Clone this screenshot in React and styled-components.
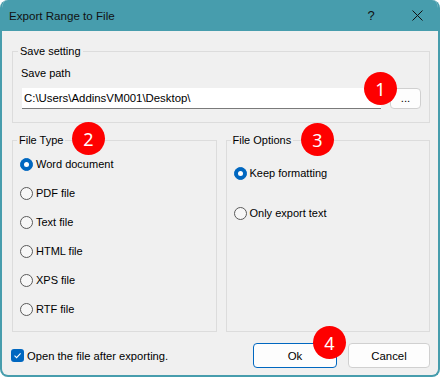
import React from 'react'
import styled, {createGlobalStyle} from 'styled-components'

const GlobalStyle = createGlobalStyle`
  html, body {
    margin: 0;
    padding: 0;
    background: #ffffff;
  }
  * {
    box-sizing: border-box;
  }
`

const Window = styled.div`
  position: relative;
  width: 440px;
  height: 377px;
  display: flex;
  flex-direction: column;
  background-color: #f0f0f0;
  border: 2px solid #479dad;
  border-top: none;
  border-radius: 8px;
  overflow: hidden;
  font-family: 'Liberation Sans', Arial, sans-serif;
  font-size: 11px;
  color: #000000;
`

const TitleBar = styled.div`
  height: 31px;
  flex-shrink: 0;
  display: flex;
  align-items: center;
  background-color: #479dad;
  padding-left: 7px;
  margin: 0 -2px;
`

const Title = styled.span`
  flex: 1;
  font-size: 11.6px;
  color: #111111;
  padding-left: 2px;
`

const TitleButton = styled.div`
  width: 46px;
  height: 31px;
  display: flex;
  align-items: center;
  justify-content: center;
  font-size: 13px;
  color: #111111;
`

const Body = styled.div`
  flex: 1;
  display: flex;
  flex-direction: column;
  padding: 13px 8px 0 10px;
`

const Group = styled.fieldset`
  margin: 0;
  padding: ${p => p.$pad || '8px 8px 13px 8px'};
  border: 1px solid #dcdcdc;
  border-radius: 0;
  min-width: 0;
  display: flex;
  flex-direction: column;
  flex: ${p => (p.$grow ? 1 : 'none')};
`

const Legend = styled.legend`
  padding: 0 2px;
  margin-left: -3px;
  font-size: 11px;
  font-weight: 400;
  line-height: 14px;
  color: #000000;
`

const Label = styled.div`
  line-height: 14px;
`

const PathRow = styled.div`
  display: flex;
  align-items: center;
  gap: 9px;
  margin-top: 7px;
`

const PathInput = styled.input`
  flex: 1;
  height: 21px;
  margin-left: 1px;
  margin-top: 1px;
  border: none;
  border-bottom: 1px solid #7a7a7a;
  background: #ffffff;
  padding: 0 2px;
  font-family: 'Liberation Sans', Arial, sans-serif;
  font-size: 11.4px;
  color: #000000;
  outline: none;
`

const Button = styled.button`
  width: ${p => p.$w || 83}px;
  height: ${p => p.$h || 25}px;
  padding: 0;
  background: #fdfdfd;
  border: 1px solid ${p => (p.$focus ? '#0067c0' : '#d0d0d0')};
  border-radius: 4px;
  font-family: 'Liberation Sans', Arial, sans-serif;
  font-size: 11.4px;
  color: #000000;
`

const Columns = styled.div`
  display: flex;
  gap: 9px;
  margin-top: 10px;
`

const OptionList = styled.div`
  display: flex;
  flex-direction: column;
  gap: ${p => p.$gap}px;
`

const Option = styled.label`
  display: flex;
  align-items: center;
  gap: 3px;
  line-height: 14px;
  height: 14px;
`

const RadioDot = styled.span`
  width: 13px;
  height: 13px;
  border-radius: 50%;
  flex-shrink: 0;
  display: flex;
  align-items: center;
  justify-content: center;
  background: ${p => (p.$on ? '#0067c0' : '#f7f7f7')};
  border: 1px solid ${p => (p.$on ? '#0067c0' : '#5a5a5a')};
  &::after {
    content: '';
    display: ${p => (p.$on ? 'block' : 'none')};
    width: 5px;
    height: 5px;
    border-radius: 50%;
    background: #ffffff;
  }
`

const Footer = styled.div`
  display: flex;
  align-items: center;
  margin-top: 11px;
  gap: 11px;
`

const CheckRow = styled.label`
  flex: 1;
  display: flex;
  align-items: center;
  gap: 3px;
  margin-left: -1px;
  font-size: 11.2px;
`

const CheckBox = styled.span`
  width: 13px;
  height: 13px;
  border-radius: 3px;
  background: #0067c0;
  display: flex;
  align-items: center;
  justify-content: center;
`

const Badge = styled.div`
  position: absolute;
  left: ${p => p.$x - 16}px;
  top: ${p => p.$y - 16}px;
  width: 33px;
  height: 33px;
  border-radius: 50%;
  background: #fe0000;
  color: #ffffff;
  display: flex;
  align-items: center;
  justify-content: center;
  font-family: 'Noto Sans', 'Liberation Sans', sans-serif;
  font-size: 18px;
  line-height: 1;
`

const Radio = ({on, children}) => (
  <Option>
    <RadioDot $on={on} />
    <span>{children}</span>
  </Option>
)

const fileTypes = ['Word document', 'PDF file', 'Text file', 'HTML file', 'XPS file', 'RTF file']

export default function App() {
  return (
    <>
      <GlobalStyle />
      <Window>
        <TitleBar>
          <Title>Export Range to File</Title>
          <TitleButton>?</TitleButton>
          <TitleButton>
            <svg width="11" height="11" viewBox="0 0 11 11">
              <path d="M0.5 0.5L10.5 10.5M10.5 0.5L0.5 10.5" stroke="#111" strokeWidth="1" />
            </svg>
          </TitleButton>
        </TitleBar>
        <Body>
          <Group>
            <Legend>Save setting</Legend>
            <Label>Save path</Label>
            <PathRow>
              <PathInput readOnly value="C:\Users\AddinsVM001\Desktop\" />
              <Button $w={31} $h={21}>...</Button>
            </PathRow>
          </Group>
          <Columns>
            <Group $grow $pad="10px 8px 15px 7px">
              <Legend>File Type</Legend>
              <OptionList $gap={15}>
                {fileTypes.map((t, i) => (
                  <Radio key={t} on={i === 0}>{t}</Radio>
                ))}
              </OptionList>
            </Group>
            <Group $grow $pad="19px 8px 15px 7px">
              <Legend>File Options</Legend>
              <OptionList $gap={26}>
                <Radio on>Keep formatting</Radio>
                <Radio>Only export text</Radio>
              </OptionList>
            </Group>
          </Columns>
          <Footer>
            <CheckRow>
              <CheckBox>
                <svg width="9" height="9" viewBox="0 0 9 9">
                  <path d="M1.5 4.6L3.6 6.6L7.6 2.4" stroke="#fff" strokeWidth="1.1" fill="none" />
                </svg>
              </CheckBox>
              <span>Open the file after exporting.</span>
            </CheckRow>
            <Button $focus $w={84}>Ok</Button>
            <Button $w={82}>Cancel</Button>
          </Footer>
        </Body>
        <Badge $x={378} $y={88}>1</Badge>
        <Badge $x={86} $y={138}>2</Badge>
        <Badge $x={315} $y={139}>3</Badge>
        <Badge $x={327} $y={342}>4</Badge>
      </Window>
    </>
  )
}
